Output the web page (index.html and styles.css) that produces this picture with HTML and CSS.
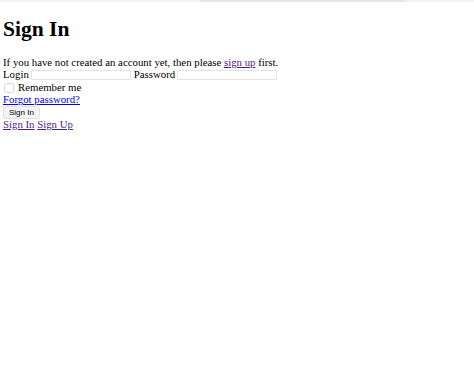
FILE: index.html
```html
<!DOCTYPE html>
<html>
<head>
<meta charset="utf-8">
<title>Sign In</title>
<link rel="stylesheet" href="styles.css">
</head>
<body>
<div class="topbar"><span class="seg seg-a"></span><span class="seg seg-b"></span><span class="seg seg-c"></span></div>
<main class="page">
  <h1 class="title">Sign In</h1>
  <p class="intro">If you have not created an account yet, then please <a class="visited" href="#">sign up</a> first.</p>
  <form class="form">
    <div class="row">
      <label class="label">Login</label>
      <input class="field" type="text">
      <label class="label">Password</label>
      <input class="field" type="password">
    </div>
    <div class="row row-check">
      <input class="check" type="checkbox">
      <label class="label">Remember me</label>
    </div>
    <div class="row"><a class="link" href="#">Forgot password?</a></div>
    <div class="row row-btn"><button class="btn" type="button">Sign In</button></div>
  </form>
  <nav class="nav"><a class="visited" href="#">Sign In</a> <a class="visited" href="#">Sign Up</a></nav>
</main>
</body>
</html>
```
FILE: styles.css
```css
html, body { margin: 0; padding: 0; background: #fff; }
body {
  font-family: "Liberation Serif", "Times New Roman", serif;
  font-size: 10.8px;
  line-height: 12.4px;
  color: #000;
}
.topbar { display: flex; height: 2px; }
.seg { display: block; height: 2px; }
.seg-a { width: 200px; background: #f1f1f1; }
.seg-b { width: 205px; background: #e6e6e6; }
.seg-c { flex: 1; background: #f1f1f1; }
.page { padding: 0 3px; }
.title {
  font-size: 21.5px;
  line-height: 25px;
  font-weight: bold;
  margin: 15px 0 14px;
}
.intro { margin: 0; }
.form { margin: 0; }
.row { display: flex; align-items: center; min-height: 12.4px; }
.row-check { height: 12.6px; }
.row-btn { height: 12px; }
.label { margin-right: 2px; }
.field {
  width: 98px;
  height: 8px;
  border: 1px solid #e4e4e4;
  border-radius: 1px;
  margin: 0 3px 0 0;
  padding: 0;
  background: #fff;
}
.check {
  -webkit-appearance: none;
  appearance: none;
  width: 10px; height: 10px;
  margin: 1px 4px 0 1px;
  border: 1px solid #dcdcdc;
  border-radius: 2px;
  background: #fff;
}
.link { color: #0000ee; }
.visited { color: #551a8b; }
.btn {
  font-family: "Liberation Sans", Arial, sans-serif;
  font-size: 8px;
  line-height: 9px;
  padding: 1px 5px;
  margin: 0;
  border: 1px solid #e0e0e0;
  border-radius: 3px;
  background: #f4f4f4;
  color: #000;
}
.nav { margin: 0; }
```
